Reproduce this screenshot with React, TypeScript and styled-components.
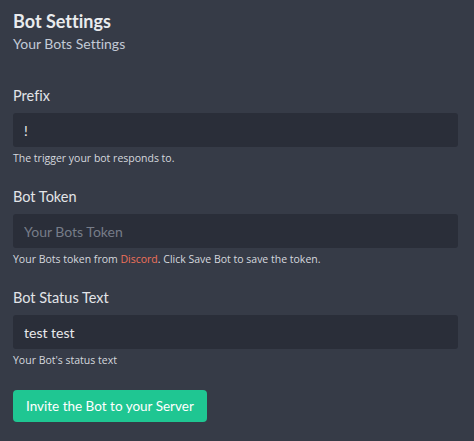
import React from "react";
import styled, { createGlobalStyle } from "styled-components";

const Global = createGlobalStyle`
  html, body { margin: 0; padding: 0; background: #363b47; }
  body { font-family: Lato, "Open Sans", sans-serif; font-variant-ligatures: none; }
  * { box-sizing: border-box; }
`;

const Page = styled.div`
  width: 474px;
  height: 441px;
  background: #363b47;
  padding: 8px 16px 0 13px;
  display: flex;
  flex-direction: column;
`;

const Title = styled.h2`
  margin: 0;
  font-size: 18px;
  line-height: 26px;
  font-weight: 700;
  color: #e9ebee;
`;

const Subtitle = styled.div`
  font-size: 14px;
  line-height: 20px;
  color: #c3cad6;
  margin-bottom: 31px;
`;

const Group = styled.div`
  display: flex;
  flex-direction: column;
  margin-bottom: 20px;
`;

const Label = styled.label`
  font-size: 14.5px;
  line-height: 21px;
  font-weight: 400;
  color: #e2e4e8;
  margin-bottom: 7px;
`;

const Input = styled.input`
  height: 34px;
  width: 100%;
  border: none;
  outline: none;
  border-radius: 3px;
  background: #2a2e39;
  color: #e8e9ec;
  font-family: inherit;
  font-size: 14px;
  padding: 0 11px;
  font-variant-ligatures: none;
  &::placeholder { color: #767c88; }
`;

const Help = styled.div`
  margin-top: 3px;
  font-family: "Open Sans", sans-serif;
  font-size: 10.5px;
  line-height: 16px;
  color: #d5d8de;
`;

const Link = styled.a`
  color: #f0715a;
  text-decoration: none;
`;

const Button = styled.button`
  align-self: flex-start;
  margin-top: 2px;
  height: 32px;
  padding: 0 13px;
  border: none;
  border-radius: 4px;
  background: #1fc692;
  color: #ffffff;
  font-family: inherit;
  font-size: 13.5px;
  font-weight: 400;
`;

export default function App() {
  return (
    <>
      <Global />
      <Page>
        <Title>Bot Settings</Title>
        <Subtitle>Your Bots Settings</Subtitle>
        <Group>
          <Label>Prefix</Label>
          <Input defaultValue="!" />
          <Help>The trigger your bot responds to.</Help>
        </Group>
        <Group>
          <Label>Bot Token</Label>
          <Input placeholder="Your Bots Token" />
          <Help>
            Your Bots token from <Link href="#">Discord</Link>. Click Save Bot to save the token.
          </Help>
        </Group>
        <Group>
          <Label>Bot Status Text</Label>
          <Input defaultValue="test test" />
          <Help>Your Bot's status text</Help>
        </Group>
        <Button>Invite the Bot to your Server</Button>
      </Page>
    </>
  );
}
